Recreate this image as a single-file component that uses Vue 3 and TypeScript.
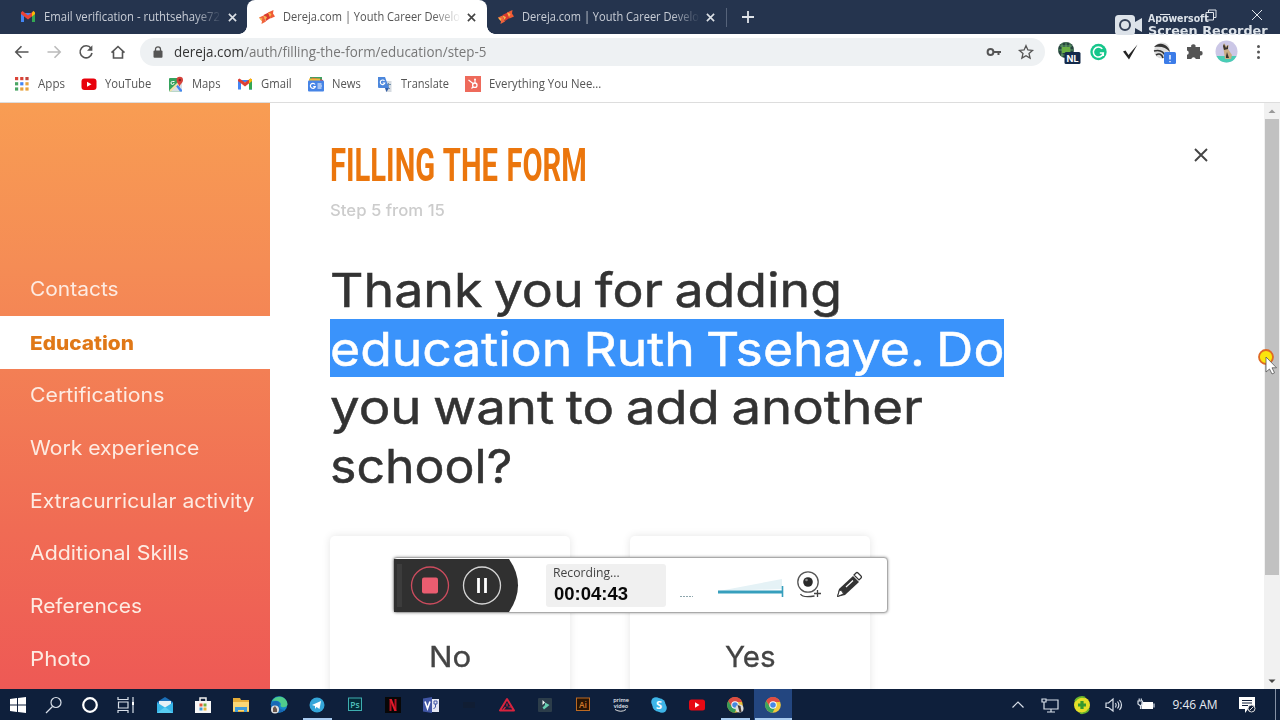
<script setup lang="ts">
import type { Directive } from 'vue'

// Stretches or condenses a single line of text to a given width in pixels.
const vFit: Directive<HTMLElement, number> = {
  mounted(el, { value }) {
    const natural = el.offsetWidth
    if (!natural) return
    el.style.transform = `scaleX(${value / natural})`
    el.style.marginRight = `${value - natural}px`
  },
}

interface Tab { title: string; icon: 'gmail' | 'dereja'; active: boolean; width: number }
interface Bookmark { label: string; icon: string; width: number }
interface Step { label: string; width: number; active?: boolean }

const tabs: Tab[] = [
  { title: 'Email verification - ruthtsehaye72', icon: 'gmail', active: false, width: 176 },
  { title: 'Dereja.com | Youth Career Develo', icon: 'dereja', active: true, width: 177 },
  { title: 'Dereja.com | Youth Career Develo', icon: 'dereja', active: false, width: 177 },
]

const bookmarks: Bookmark[] = [
  { label: 'Apps', icon: 'apps', width: 27 },
  { label: 'YouTube', icon: 'youtube', width: 46 },
  { label: 'Maps', icon: 'maps', width: 29 },
  { label: 'Gmail', icon: 'gmail', width: 31 },
  { label: 'News', icon: 'news', width: 29 },
  { label: 'Translate', icon: 'translate', width: 48 },
  { label: 'Everything You Nee...', icon: 'hubspot', width: 112 },
]

const steps: Step[] = [
  { label: 'Contacts', width: 89 },
  { label: 'Education', width: 104, active: true },
  { label: 'Certifications', width: 134 },
  { label: 'Work experience', width: 169 },
  { label: 'Extracurricular activity', width: 224 },
  { label: 'Additional Skills', width: 159 },
  { label: 'References', width: 112 },
  { label: 'Photo', width: 61 },
]

const question = [
  { text: 'Thank you for adding', width: 512, selected: false },
  { text: 'education Ruth Tsehaye. Do', width: 674, selected: true },
  { text: 'you want to add another', width: 593, selected: false },
  { text: 'school?', width: 182, selected: false },
]

const answers = [
  { label: 'No', width: 42 },
  { label: 'Yes', width: 51 },
]

const appGrid = ['#db4437', '#db4437', '#c5453c', '#4aa564', '#4285f4', '#e8a33d', '#4aa564', '#e8a33d', '#e8a33d']
</script>

<template>
  <div class="screen">
    <header class="tabstrip">
      <div v-for="(tab, i) in tabs" :key="i" class="tab" :class="{ active: tab.active }">
        <svg v-if="tab.icon === 'gmail'" class="fav" viewBox="0 0 16 16">
          <path d="M1 4v9h3V7l4 3 4-3v6h3V4" fill="#4285f4" />
          <path d="M4 7l4 3 4-3v6.500H4z" fill="#25344e" />
          <path d="M12 6.500 15 4v9h-3z" fill="#34a853" />
          <path d="M1 3.500 2.500 2 8 6.500 13.500 2 15 3.500V5l-7 5.500L1 5z" fill="#ea4335" />
          <path d="M12 3.400 13.500 2 15 3.500V5l-3 2.400z" fill="#fbbc04" />
        </svg>
        <svg v-else class="fav" viewBox="0 0 16 16">
          <path d="M0 8.500l4.500-2 2.500 6-4.500 2.500.5-3z" fill="#f0643c" />
          <path d="M4.500 6l5-2.500 2 5.500-4.500 3z" fill="#d93a2f" />
          <path d="M9 3.500 14.500 1 14 4.500l2 3-4.500 2z" fill="#ef5b35" />
          <path d="M0 8.500l3.500 1L2.500 12zM4.500 6.500l3.500 1.500-1.500 3zM9 3.500l3.500 1.500-1.500 3z" fill="#f7b64a" />
        </svg>
        <div class="tab-title"><span v-fit="tab.width" class="line">{{ tab.title }}</span></div>
        <svg class="tab-close" viewBox="0 0 10 10"><path d="M1 1l8 8M9 1L1 9" /></svg>
      </div>
      <i class="tab-sep"></i>
      <svg class="plus" viewBox="0 0 12 12"><path d="M6 0v12M0 6h12" /></svg>
      <div class="window-buttons">
        <svg viewBox="0 0 12 12"><path d="M1 5.500h10" /></svg>
        <svg viewBox="0 0 12 12"><path d="M1 3.500h7.500V11H1zM3.500 3V1H11v7.500H9" /></svg>
        <svg viewBox="0 0 12 12"><path d="M1 1l10 10M11 1L1 11" /></svg>
      </div>
    </header>

    <div class="toolbar">
      <div class="nav">
        <svg viewBox="0 0 16 16"><path d="M14.500 8H2M7.500 2.300 1.800 8l5.700 5.700" /></svg>
        <svg class="off" viewBox="0 0 16 16"><path d="M1.500 8H14M8.500 2.300 14.200 8l-5.700 5.700" /></svg>
        <svg viewBox="0 0 16 16"><path d="M13 4.300A6 6 0 1 0 14 9" /><path d="M14.400 1.300v5.400H9z" fill="#555" stroke="none" /></svg>
        <svg viewBox="0 0 16 16"><path d="M1.500 8.700 8 2.500l6.500 6.200M3.500 7.500V14h9V7.500" /></svg>
      </div>
      <div class="address">
        <svg class="lock" viewBox="0 0 10 12"><rect x=".5" y="4.500" width="9" height="7.300" rx="1" fill="#555" /><path d="M2.500 5V3.300a2.500 2.500 0 0 1 5 0V5" fill="none" stroke="#555" stroke-width="1.300" /></svg>
        <span v-fit="313" class="line url"><b>dereja.com</b>/auth/filling-the-form/education/step-5</span>
        <svg class="key" viewBox="0 0 16 10"><circle cx="4.500" cy="5" r="2.900" /><path d="M7.500 5H15M12.500 5v3" /></svg>
        <svg class="star" viewBox="0 0 16 16"><path d="M8 1.700l1.900 4.300 4.600.4-3.500 3.100 1.100 4.600L8 11.700l-4.100 2.400L5 9.500 1.500 6.400l4.600-.4z" /></svg>
      </div>
      <div class="extensions">
        <div><svg viewBox="0 0 28 28"><circle cx="13" cy="12" r="8" fill="#24453c" /><path d="M5 12h16M13 4v16M7 8h12M8 17h10M9 5v14M17 5v14" stroke="#77b87a" stroke-width=".7" fill="none" /><path d="M9 9h8v6H9z" fill="#69b044" /><rect x="11.500" y="14" width="16" height="12" rx="1.500" fill="#142a4b" /><text x="19.500" y="23.500" text-anchor="middle" class="badge-text">NL</text></svg></div>
        <div><svg viewBox="0 0 28 28"><circle cx="13.500" cy="14" r="8.200" fill="#16c68b" /><path d="M17.300 10.900A5 5 0 1 0 18.300 15h-3.500m3.500 0v3" stroke="#fff" stroke-width="1.500" fill="none" /></svg></div>
        <div><svg viewBox="0 0 28 28"><path d="M6 13.500l2.500-1 3 4.500 9-10.500-8.500 15z" fill="#252525" /></svg></div>
        <div><svg viewBox="0 0 28 28"><circle cx="13" cy="12.500" r="8" fill="#dcdcdc" /><path d="M5 9C11 2 20 7 21 14c-4-5-9-6-16-5z" fill="#333" /><path d="M5 13c7-2 10 1 12 6M7 17c3-2 6-1 7 3" stroke="#333" stroke-width="1.600" fill="none" /><rect x="15" y="14" width="12" height="12" rx="1.500" fill="#3c7ce8" /><path d="M21 17v4.500M21 23v1.300" stroke="#fff" stroke-width="1.400" /></svg></div>
        <div><svg viewBox="0 0 28 28"><path d="M6 9h4.200a2.200 2.200 0 1 1 4.300 0H19v4.200a2.200 2.200 0 1 1 0 4.300V21h-4.200a2.300 2.300 0 0 0-4.500 0H6v-4.200a2.200 2.200 0 0 0 0-4.300z" fill="#555" /></svg></div>
        <div><svg viewBox="0 0 28 28"><circle cx="13.500" cy="13.500" r="11" fill="#cbc7e6" /><path d="M3.500 18h20a11 11 0 0 1-20 0z" fill="#49cdb5" /><path d="M10 8l1-3 2 3 3-1-1 4 4 6-1 4h-6l-1-7z" fill="#c9ad83" /><path d="M10 8l1-2 2 4 2-3v4l-4 1zM13 18l1-4 2 6h-3z" fill="#38332f" /></svg></div>
        <div><svg viewBox="0 0 28 28"><circle cx="13.500" cy="8.500" r="1.500" fill="#555" /><circle cx="13.500" cy="14" r="1.500" fill="#555" /><circle cx="13.500" cy="19.500" r="1.500" fill="#555" /></svg></div>
      </div>
    </div>

    <nav class="bookmarks">
      <div v-for="b in bookmarks" :key="b.label" class="bookmark">
        <svg viewBox="0 0 16 16">
          <template v-if="b.icon === 'apps'">
            <rect v-for="(c, n) in appGrid" :key="n" :x="1 + (n % 3) * 5.200" :y="1 + Math.floor(n / 3) * 5.200" width="3.200" height="3.200" :fill="c" />
          </template>
          <template v-else-if="b.icon === 'youtube'">
            <rect x=".5" y="2.500" width="15" height="11.500" rx="3" fill="#e8000b" /><path d="M6 5.700v5l4.500-2.500z" fill="#fff" />
          </template>
          <template v-else-if="b.icon === 'maps'">
            <rect x="1" y="2" width="13" height="13.500" rx="1" fill="#36a35d" /><path d="M2 15.500 14 4v11.500z" fill="#d9dfe4" /><path d="M7.500 9.500l1.500-1.500 5 6v1.500h-2z" fill="#4285f4" /><path d="M2 15 13 4.500" stroke="#f1e3a5" stroke-width="1.800" /><path d="M11.500 11C11 8 8.500 7 8.500 4a3.200 3.200 0 0 1 6.500 0c0 3-3 4-3.500 7z" fill="#d6413a" /><circle cx="11.800" cy="4" r="1.200" fill="#802820" /><path d="M6.500 5.500H4.700a1.500 1.500 0 1 0 1.300 1.500" stroke="#fff" fill="none" />
          </template>
          <template v-else-if="b.icon === 'gmail'">
            <path d="M1 4v9.500h3V7H12v6.500h3V4" fill="#4285f4" /><path d="M4 6h8v9H4z" fill="#fff" /><path d="M12 6.500 15 4v9.500h-3z" fill="#34a853" /><path d="M1 3.500 2.500 2.500 8 6.500l5.500-4L15 3.500V5l-7 5.500L1 5z" fill="#dc4035" /><path d="M12 3.600l1.500-1.100L15 3.500V5l-3 2.400z" fill="#fbbc04" />
          </template>
          <template v-else-if="b.icon === 'news'">
            <path d="M2 1h12v5H2z" fill="#40a05f" /><path d="M4 1.500 15 4v5H4z" fill="#d94b42" /><path d="M1 2.500h11v5H1z" fill="#eebb3c" /><rect y="4.500" width="16" height="11" rx="1" fill="#4684e6" /><path d="M7 8.500A2.500 2.500 0 1 0 7.300 10.500H5.200M9.500 8h4M9.500 10h4.500M9.500 12h4" stroke="#fff" stroke-width="1.200" fill="none" />
          </template>
          <template v-else-if="b.icon === 'translate'">
            <path d="M6 5h8.500v11H9z" fill="#d6dbe1" /><path d="M9 8.500h5M11.500 7v2c0 2-1 3-2 4M10 10l3 3" stroke="#6e90ac" fill="none" /><path d="M1 1h7l4 11H2a1 1 0 0 1-1-1z" fill="#4c87dc" /><path d="M8 12h4l-2.500 4z" fill="#315da5" /><path d="M7.500 5A2.300 2.300 0 1 0 7.800 7H5.700" stroke="#fff" fill="none" stroke-width="1.100" />
          </template>
          <template v-else>
            <rect width="16" height="16" fill="#ee6a5b" /><circle cx="9.800" cy="9.200" r="2.200" fill="none" stroke="#fff" stroke-width="1.300" /><path d="M3.500 4l4.500 3.500M10 4v3M8 11l-1.500 1.500" stroke="#fff" stroke-width="1.100" /><circle cx="10" cy="3.600" r="1" fill="#fff" />
          </template>
        </svg>
        <span v-fit="b.width" class="line">{{ b.label }}</span>
      </div>
    </nav>

    <main class="page">
      <aside class="sidebar">
        <div v-for="s in steps" :key="s.label" class="step" :class="{ current: s.active }">
          <span v-fit="s.width" class="line">{{ s.label }}</span>
        </div>
      </aside>
      <section class="form">
        <svg class="close" viewBox="0 0 14 14"><path d="M1 1l12 12M13 1L1 13" /></svg>
        <h1><span v-fit="257" class="line">FILLING THE FORM</span></h1>
        <p class="progress"><span v-fit="115" class="line">Step 5 from 15</span></p>
        <h2>
          <div v-for="q in question" :key="q.text" class="q-line" :class="{ selected: q.selected }">
            <span v-fit="q.width" class="line">{{ q.text }}</span>
          </div>
        </h2>
        <div class="answers">
          <div v-for="a in answers" :key="a.label" class="answer"><span v-fit="a.width" class="line">{{ a.label }}</span></div>
        </div>
      </section>
      <div class="scrollbar">
        <svg viewBox="0 0 14 16"><path d="M3.500 10h7L7 6.500z" fill="#999" /></svg>
        <div class="thumb"></div>
        <svg viewBox="0 0 14 16"><path d="M3.500 6.500h7L7 10z" fill="#444" /></svg>
      </div>
    </main>

    <footer class="taskbar">
      <div class="launch">
        <div><svg viewBox="0 0 20 20"><path d="M2 4l7-1v6.500H2zM10 2.900 18 2v7.500h-8zM2 10.500h7V17l-7-1zM10 10.500h8V18l-8-1z" fill="#fff" /></svg></div>
        <div><svg viewBox="0 0 20 20"><circle cx="12" cy="7.500" r="5" class="ln" /><path d="M8.500 11.500 2 18" class="ln" /></svg></div>
        <div><svg viewBox="0 0 20 20"><circle cx="10" cy="10" r="6.800" fill="none" stroke="#fff" stroke-width="2.200" /></svg></div>
        <div><svg viewBox="0 0 20 20"><path d="M2 2v2.500h10V2M2 18v-2.500h10V18M2.500 7h9.500v6H2.500zM17 2v16" class="ln" /><path d="M16 7h2v3h-2z" fill="#fff" /></svg></div>
      </div>
      <div class="apps">
        <div><svg viewBox="0 0 20 20"><path d="M2 7l8-5 8 5v10H2z" fill="#1b6fb8" /><path d="M4 6h12v8H4z" fill="#e6f0f6" /><path d="M2 7.500l8 5 8-5V18H2z" fill="#38b6e8" /><path d="M2 18l8-6 8 6z" fill="#58cdf3" /></svg></div>
        <div><svg viewBox="0 0 20 20"><path d="M7 6V3h6v3" fill="none" stroke="#eee" stroke-width="1.500" /><path d="M2 6h16v12H2z" fill="#f7f7f7" /><path d="M6.500 8.500h3v3h-3z" fill="#e25739" /><path d="M10.500 8.500h3v3h-3z" fill="#77b142" /><path d="M6.500 12.500h3v3h-3z" fill="#3e9dd8" /><path d="M10.500 12.500h3v3h-3z" fill="#e9b53a" /></svg></div>
        <div><svg viewBox="0 0 20 20"><path d="M2 3h7l1 2h8v12H2z" fill="#e5ad39" /><path d="M2 7h16v9H2z" fill="#f9d776" /><path d="M4 12h12v5h-3v-2H7v2H4z" fill="#3d9bd9" /></svg></div>
        <div><svg viewBox="0 0 20 20"><circle cx="10" cy="9.500" r="8.300" fill="#1588c9" /><path d="M3 6C7-1 18 1 18.500 9c0 4-6 4-7 2 2-4-3-6-8.500-5z" fill="#50cc8b" /><path d="M2 10c1-5 8-5 9-1-2 2-1 6 5 6-6 5-14 2-14-5z" fill="#1868b5" /><circle cx="6" cy="14.500" r="4" fill="#ddd" /><path d="M4 17v-4l2-2 2 3v3z" fill="#69564c" /></svg></div>
        <div class="open"><svg viewBox="0 0 20 20"><circle cx="10" cy="10" r="7.500" fill="#35a6d9" /><path d="M5 10l9-4-1.500 8-3-2-1.500 2V11z" fill="#fff" /></svg></div>
        <div><svg viewBox="0 0 20 20"><rect x="3.500" y="3" width="13" height="12.500" fill="#042c39" stroke="#3eaeb0" /><text x="10" y="12.500" text-anchor="middle" class="ps">Ps</text></svg></div>
        <div><svg viewBox="0 0 20 20"><rect x="2" y="2" width="16" height="16" fill="#080707" /><path d="M6.500 4h2v12h-2zM11.500 4h2v12h-2z" fill="#b81020" /><path d="M6.500 4h2.200l4.800 12h-2.200z" fill="#e31b2c" /></svg></div>
        <div><svg viewBox="0 0 20 20"><path d="M10 4h8v13h-8z" fill="#e5e8f4" /><path d="M2 3.500l9-1.500v16l-9-1.500z" fill="#4056a5" /><path d="M4 6.500l2.500 7 2.500-7" fill="none" stroke="#fff" stroke-width="1.600" /><path d="M13 6v3h3V6zM14.500 9v3l-2 2" stroke="#4056a5" fill="none" /></svg></div>
        <div><svg viewBox="0 0 20 20"><path d="M4 7h12v6H4z" fill="#101d33" /></svg></div>
        <div><svg viewBox="0 0 20 20"><path d="M10 4 3 15.500h14z" fill="none" stroke="#d9233e" stroke-width="2" stroke-linejoin="round" /><path d="M10 8.500v3M8.500 12l-2.500 3M11.500 12h3" fill="none" stroke="#d9233e" stroke-width="1.200" /></svg></div>
        <div><svg viewBox="0 0 20 20"><rect x="3" y="3" width="14" height="14" rx="1" fill="#2c3d4a" /><path d="M7.500 5l2.500 2.500-2.500 2.500z" fill="#f5f9f8" /><path d="M10 7.500l4.500 2.500-5.500 4.500-1.500-2 2.500-2.500z" fill="#67cfb1" /></svg></div>
        <div><svg viewBox="0 0 20 20"><rect x="3.500" y="3" width="13" height="12.500" fill="#291403" stroke="#bd6a22" /><text x="10" y="12.500" text-anchor="middle" class="ai">Ai</text></svg></div>
        <div><svg viewBox="0 0 20 20"><text x="10" y="7" text-anchor="middle" class="prime">prime</text><text x="10" y="12.500" text-anchor="middle" class="prime">video</text><path d="M4 14.500q6 3.500 11 0" fill="none" stroke="#ddd" /></svg></div>
        <div><svg viewBox="0 0 20 20"><circle cx="7" cy="7" r="4.800" fill="#3eb5e8" /><circle cx="13" cy="13" r="4.800" fill="#3eb5e8" /><circle cx="10" cy="10" r="6.700" fill="#3eb5e8" /><text x="10" y="14" text-anchor="middle" class="skype">S</text></svg></div>
        <div><svg viewBox="0 0 20 20"><rect x="2" y="4.500" width="16" height="11" rx="2.500" fill="#e70914" /><path d="M8 7.300v5.400l4.500-2.700z" fill="#fff" /></svg></div>
        <div class="open"><svg viewBox="0 0 20 20"><circle cx="10" cy="10" r="7.800" fill="#e5bd3b" /><path d="M3.200 6A7.800 7.800 0 0 1 17.200 7H10L7 12z" fill="#dc4c42" /><path d="M3.200 6A7.800 7.800 0 0 0 9.500 17.700L12.500 12 7 12z" fill="#379b58" /><circle cx="10" cy="10" r="3.700" fill="#fff" /><circle cx="10" cy="10" r="2.800" fill="#4688de" /><circle cx="14.500" cy="13.500" r="4" fill="#ddd" /><path d="M12.500 10l3 1 1 6h-2z" fill="#443b35" /></svg></div>
        <div class="focused"><svg viewBox="0 0 20 20"><circle cx="10" cy="10" r="7.800" fill="#f1c83d" /><path d="M3.200 6A7.800 7.800 0 0 1 17.200 7H10L7 12z" fill="#e14c42" /><path d="M3.200 6A7.800 7.800 0 0 0 9.500 17.700L12.500 12 7 12z" fill="#3aa55d" /><circle cx="10" cy="10" r="3.700" fill="#fff" /><circle cx="10" cy="10" r="2.800" fill="#4688e8" /></svg></div>
      </div>
      <div class="tray">
        <div><svg viewBox="0 0 20 20"><path d="M4.500 12.500 10 7l5.500 5.500" class="ln" /></svg></div>
        <div><svg viewBox="0 0 20 20"><path d="M6 5h12v9H4V9M11 14v3M7 17h8M2 4h4v3H2zM4 7v3" class="ln" /></svg></div>
        <div><svg viewBox="0 0 20 20"><circle cx="10" cy="10" r="8" fill="#e4df28" /><path d="M3 6A8 8 0 0 1 13 2.500M17 14A8 8 0 0 1 8 18" stroke="#68b52d" stroke-width="1.800" fill="none" /><path d="M10 6v8M6 10h8" stroke="#36982e" stroke-width="3.200" /></svg></div>
        <div><svg viewBox="0 0 20 20"><path d="M2 8v4.500h2.500L9 16V4L4.500 8zM11.500 8q1.500 2 0 4.500M13.500 6.500q2.700 3.500 0 7M15.500 5q4 5 0 10" class="ln" /></svg></div>
        <div><svg viewBox="0 0 20 20"><path d="M5.500 7H17v7H5.500z" fill="#fff" /><path d="M18 8.500v4M2 6h4.500v3l-2 2L2 9zM3.200 3.500V6M5.300 3.500V6M4.500 11v3" class="ln" /></svg></div>
        <div class="clock"><span v-fit="45" class="line">9:46 AM</span></div>
        <div class="notices"><svg viewBox="0 0 20 20"><path d="M2 2h16v12h-7l-3 4v-4H2z" fill="#fff" /><path d="M5 5.500h10M5 8h10M5 10.500h6" stroke="#12203a" /><circle cx="14.500" cy="13.500" r="3.500" fill="#12203a" stroke="#ddd" /><path d="M12.500 15.500l4-4" stroke="#ddd" /></svg></div>
      </div>
    </footer>

    <div class="recorder">
      <svg class="controls" viewBox="0 0 124 53">
        <path d="M0 0h115q18 26 0 53H0z" fill="#303030" /><path d="M3 5h5v43H3z" fill="#3c3c3c" />
        <circle cx="36" cy="26.500" r="18.500" fill="none" stroke="#cc4c5e" stroke-width="1.300" /><rect x="28" y="18.500" width="16" height="16" rx="2" fill="#ea5d70" />
        <circle cx="88" cy="26.500" r="18.500" fill="none" stroke="#d5d5d5" stroke-width="1.300" /><path d="M84.500 19v15M91.500 19v15" stroke="#fff" stroke-width="2.800" />
      </svg>
      <div class="timer">
        <span v-fit="67" class="line status">Recording...</span>
        <span v-fit="74" class="line elapsed">00:04:43</span>
      </div>
      <i class="dots"></i>
      <svg class="volume" viewBox="0 0 68 20"><path d="M2 13 65 1v10z" fill="#e5f2f6" /><path d="M1 14h65" stroke="#379fbd" stroke-width="3" /><path d="M65.500 8v11" stroke="#379fbd" stroke-width="1.600" /></svg>
      <svg class="webcam" viewBox="0 0 26 28"><circle cx="12" cy="11" r="10.200" fill="none" stroke="#555" stroke-width="1.300" /><circle cx="12" cy="11" r="4.800" fill="#292929" /><circle cx="10.500" cy="9" r="1.300" fill="#888" /><path d="M4.500 23q2 4 14 2M18 22.500h7M21.500 19v7" fill="none" stroke="#444" stroke-width="1.300" /></svg>
      <svg class="pencil" viewBox="0 0 26 26"><path d="M1 25l2-8L17 4l6 6L9 23z" fill="#333" /><path d="M18 3l2-2q1-1 2 0l3 3q1 1 0 2l-2 2z" fill="#fff" stroke="#333" stroke-width="1.200" /><path d="M1.500 24.500l2-6.500q3 0 4 4z" fill="#fff" stroke="#333" /><path d="M10 15l7-6.500" stroke="#fff" stroke-width="1.200" /></svg>
    </div>

    <div class="watermark">
      <svg viewBox="0 0 30 28"><rect x="1" y="1" width="20" height="20" rx="3.500" fill="#dce2e9" /><path d="M21 8l7-4v14l-7-4z" fill="#dce2e9" /><circle cx="11" cy="11" r="5" fill="#dce2e9" stroke="#344158" stroke-width="2" /></svg>
      <div class="brand"><span v-fit="61" class="line small">Apowersoft</span><span v-fit="120" class="line large">Screen Recorder</span></div>
    </div>

    <svg class="pointer" viewBox="0 0 20 28"><circle cx="9" cy="9" r="7" fill="#fbe50d" stroke="#df6a25" stroke-width="1.800" /><path d="M9 9v15l3.500-3 2.500 5 2.500-1.200-2.500-5h4.500z" fill="#fff" stroke="#555" stroke-width=".8" /></svg>
  </div>
</template>

<style>
html, body { margin: 0; overflow: hidden; }
</style>

<style scoped>
.screen { position: relative; width: 1280px; height: 720px; overflow: hidden; display: flex; flex-direction: column; background: #fff; font-family: "Open Sans", "Noto Sans", sans-serif; }
.screen * { box-sizing: border-box; }
.line { display: inline-block; white-space: nowrap; transform-origin: 0 50%; }
svg { display: block; flex: none; overflow: visible; }

.tabstrip { height: 34px; flex: none; display: flex; align-items: center; background: #25344e; color: #c9ced7; }
.tab { position: relative; display: flex; align-items: center; width: 240px; height: 34px; padding-left: 11px; }
.tab:first-child { width: 247px; padding-left: 20px; }
.tab.active { background: #fff; color: #555; border-radius: 8px 8px 0 0; padding-left: 12px; }
.tab.active::before, .tab.active::after { content: ""; position: absolute; bottom: 0; width: 8px; height: 8px; }
.tab.active::before { left: -8px; background: radial-gradient(circle at 0 0, transparent 7.500px, #fff 8px); }
.tab.active::after { right: -8px; background: radial-gradient(circle at 100% 0, transparent 7.500px, #fff 8px); }
.fav { width: 16px; height: 16px; margin-right: 8px; }
.tab-title { width: 177px; height: 18px; overflow: hidden; font-size: 12px; line-height: 17px; white-space: nowrap; -webkit-mask-image: linear-gradient(90deg, #000 150px, transparent 178px); mask-image: linear-gradient(90deg, #000 150px, transparent 178px); }
.tab-close { width: 9px; height: 9px; margin-left: 7px; fill: none; stroke: #dce0e6; stroke-width: 1.800; }
.tab.active .tab-close { stroke: #444; }
.tab-sep { width: 1px; height: 19px; margin-left: -1px; background: #56637a; }
.plus { width: 12px; height: 12px; margin-left: 15px; fill: none; stroke: #dfe3e9; stroke-width: 1.800; }
.window-buttons { display: flex; gap: 34px; margin: -5px 17px 0 auto; }
.window-buttons svg { width: 12px; height: 12px; fill: none; stroke: #e1e5eb; stroke-width: 1; }

.toolbar { height: 36px; flex: none; display: flex; align-items: center; padding-left: 6px; }
.nav { display: flex; width: 134px; padding-left: 8px; gap: 16px; }
.nav svg { width: 16px; height: 16px; fill: none; stroke: #555; stroke-width: 1.600; }
.nav .off { stroke: #bbb; }
.address { width: 905px; height: 28px; display: flex; align-items: center; padding: 0 11px 0 13px; border-radius: 14px; background: #eef1f3; }
.lock { width: 10px; height: 12px; margin-right: 11px; }
.url { font-size: 14px; line-height: 28px; color: #777; }
.url b { font-weight: 400; color: #333; }
.key { width: 16px; height: 10px; margin-left: auto; margin-right: 16px; fill: none; stroke: #555; stroke-width: 2; }
.star { width: 16px; height: 16px; fill: none; stroke: #555; stroke-width: 1.300; }
.extensions { display: flex; margin-left: 6px; }
.extensions div { width: 32px; display: flex; justify-content: center; }
.extensions svg { width: 28px; height: 28px; }
.badge-text { font: 700 9px Inter, sans-serif; fill: #fff; }

.bookmarks { height: 33px; flex: none; display: flex; gap: 16.300px; padding: 0 14px 5px; align-items: center; border-bottom: 1px solid #ddd; }
.bookmark { display: flex; align-items: center; gap: 8px; font-size: 12px; line-height: 18px; color: #555; }
.bookmark svg { width: 16px; height: 16px; }

.page { height: 586px; flex: none; display: flex; overflow: hidden; font-family: Inter, "Open Sans", sans-serif; }
.sidebar { width: 270px; flex: none; padding-top: 161px; margin-top: -1px; background: linear-gradient(#f89d53 0%, #f58c55 28%, #f06b54 73%, #ee5955 100%); }
.step { height: 52.900px; padding-left: 30px; line-height: 53px; font-size: 20px; color: #fdebe2; }
.step.current { background: #fff; color: #e07817; font-weight: 800; font-size: 19px; line-height: 55px; }
.form { position: relative; flex: 1; padding: 40px 0 0 60px; }
.close { position: absolute; right: 56px; top: 45px; width: 14px; height: 14px; fill: none; stroke: #444; stroke-width: 1.900; }
h1 { margin: 0; height: 44px; font: 700 47px/44px Roboto, sans-serif; color: #eb760d; word-spacing: 2px; }
.progress { margin: 13px 0 0; height: 20px; font-size: 16px; line-height: 20px; font-weight: 500; color: #ccc; }
h2 { margin: 40px 0 0; font-weight: 400; font-size: 47px; color: #333; word-spacing: -3px; -webkit-text-stroke: .5px currentColor; }
.q-line { height: 58.600px; line-height: 60px; width: max-content; }
.q-line.selected { background: #3a93fb; color: #fff; }
.answers { display: flex; gap: 60px; margin-top: 41.600px; }
.answer { width: 240px; height: 200px; padding-top: 101px; text-align: center; font-size: 29px; line-height: 40px; color: #444; border-radius: 5px; box-shadow: 0 0 8px rgba(0, 0, 0, .11); -webkit-text-stroke: .3px currentColor; }
.scrollbar { width: 16px; flex: none; display: flex; flex-direction: column; align-items: center; background: #f1f1f1; }
.scrollbar svg { width: 14px; height: 16px; }
.scrollbar svg:last-child { margin-top: auto; }
.thumb { width: 14px; height: 456px; background: #c1c1c1; }

.taskbar { height: 31px; flex: none; display: flex; background: #0e1f3b; }
.launch, .apps, .tray { display: flex; }
.launch div, .apps div, .tray div { height: 31px; display: flex; align-items: center; justify-content: center; }
.taskbar svg { width: 20px; height: 20px; }
.launch { width: 146px; }
.launch div { width: 36px; }
.apps div { width: 38px; }
.apps .open { background: linear-gradient(#a8cbf0, #a8cbf0) 50% 100% / 29px 2px no-repeat; }
.apps .focused { background: linear-gradient(#a8cbf0, #a8cbf0) 50% 100% / 37px 2px no-repeat, #234680; }
.ln { fill: none; stroke: #d8dfe9; stroke-width: 1.200; }
.ps, .ai { font: 600 8.500px "Open Sans", sans-serif; fill: #50c0bd; }
.ai { fill: #d57a2d; }
.prime { font: 600 5.500px "Open Sans", sans-serif; fill: #e8edf4; }
.skype { font: 700 11px "Open Sans", sans-serif; fill: #fff; }
.tray { margin-left: auto; width: 278px; }
.tray div { width: 32px; }
.tray .clock { width: 65px; padding-left: 1px; font-size: 12px; color: #e7ebf2; }
.tray .notices { width: 53px; padding-right: 13px; background: linear-gradient(#8591a5, #8591a5) 48px 0 / 1px 100% no-repeat; }

.recorder { position: absolute; left: 393px; top: 557px; width: 495px; height: 56px; display: flex; align-items: center; background: #fff; border: 1px solid #aaa; border-radius: 4px; box-shadow: 0 0 3px rgba(0, 0, 0, .4); }
.controls { width: 124px; height: 53px; }
.timer { width: 120px; height: 43px; margin-left: 28px; padding: 0 7px; background: #f0f0f0; border-radius: 3px; }
.timer .line { display: block; width: max-content; }
.status { font-size: 12px; line-height: 18px; color: #444; }
.elapsed { margin-left: 1px; font: 700 18px/24px "Liberation Sans", sans-serif; color: #080808; }
.dots { width: 13px; height: 1px; margin: 23px 0 0 14px; background: repeating-linear-gradient(90deg, #8ea6ad 0 2px, transparent 2px 3px); }
.volume { width: 68px; height: 20px; margin: 6px 0 0 24px; }
.webcam { width: 26px; height: 28px; margin-left: 11px; }
.pencil { width: 26px; height: 26px; margin-left: 14px; }

.watermark { position: absolute; left: 1114px; top: 14px; display: flex; gap: 4px; color: #dce2e9; font-family: "DejaVu Sans", sans-serif; }
.watermark svg { width: 30px; height: 28px; }
.brand { display: flex; flex-direction: column; align-items: flex-start; margin-top: -1px; }
.brand .small { font-size: 10px; line-height: 12px; font-weight: 700; }
.brand .large { font-size: 12.500px; line-height: 12px; font-weight: 700; }
.pointer { position: absolute; left: 1257px; top: 348px; width: 20px; height: 28px; }
</style>
